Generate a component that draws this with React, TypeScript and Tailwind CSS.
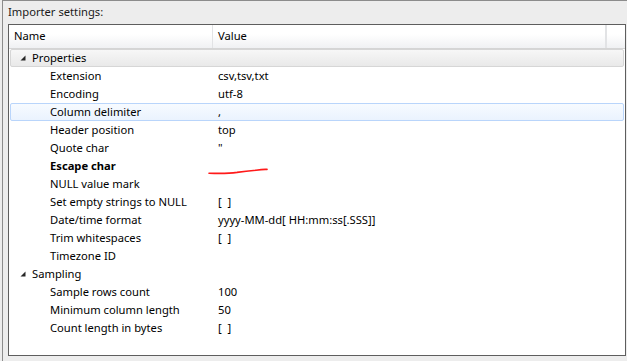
import React from "react";

type Row = { label: string; value?: string; bold?: boolean; selected?: boolean; mark?: boolean };

const props: Row[] = [
  { label: "Extension", value: "csv,tsv,txt" },
  { label: "Encoding", value: "utf-8" },
  { label: "Column delimiter", value: ",", selected: true },
  { label: "Header position", value: "top" },
  { label: "Quote char", value: '"' },
  { label: "Escape char", bold: true, mark: true },
  { label: "NULL value mark" },
  { label: "Set empty strings to NULL", value: "[  ]" },
  { label: "Date/time format", value: "yyyy-MM-dd[ HH:mm:ss[.SSS]]" },
  { label: "Trim whitespaces", value: "[  ]" },
  { label: "Timezone ID" },
];

const sampling: Row[] = [
  { label: "Sample rows count", value: "100" },
  { label: "Minimum column length", value: "50" },
  { label: "Count length in bytes", value: "[  ]" },
];

function Tri() {
  return (
    <svg width="6" height="6" viewBox="0 0 6 6" className="shrink-0">
      <polygon points="5.5,0.5 5.5,5.5 0.5,5.5" fill="#262626" />
    </svg>
  );
}

function Group({ label, boxed }: { label: string; boxed?: boolean }) {
  return (
    <div
      className={
        "h-[18px] mx-[1px] flex items-center pl-[9px] rounded-[2px] border " +
        (boxed
          ? "border-[#d6d6d6] bg-gradient-to-b from-[#f7f7f7] to-[#e9e9e9]"
          : "border-transparent")
      }
    >
      <Tri />
      <span className="ml-[6px] text-black">{label}</span>
    </div>
  );
}

function PropRow({ r }: { r: Row }) {
  return (
    <div
      className={
        "h-[18px] mx-[1px] flex items-center rounded-[2px] border relative " +
        (r.selected
          ? "border-[#b9d5fb] bg-gradient-to-b from-[#f7fbff] to-[#eaf3fe]"
          : "border-transparent")
      }
    >
      <div className={"w-[202px] pl-[39px] whitespace-nowrap " + (r.bold ? "font-bold" : "")}>{r.label}</div>
      <div className="pl-[5px] whitespace-pre">{r.value ?? ""}</div>
      {r.mark && (
        <svg className="absolute left-[197px] top-[9px]" width="62" height="8" viewBox="0 0 62 8">
          <path
            d="M1 6.2 C 12 6.6, 22 6.4, 29 5.4 C 36 4.2, 42 3.6, 48 3.2 C 52 2.6, 56 2.2, 59 2.4"
            stroke="#ff1a1a"
            strokeWidth="1.6"
            fill="none"
            strokeLinecap="round"
          />
        </svg>
      )}
    </div>
  );
}

export default function App() {
  return (
    <div
      className="w-[627px] h-[361px] bg-[#ededed] overflow-hidden text-[11.2px] text-black"
      style={{ fontFamily: '"Noto Sans", "Open Sans", sans-serif' }}
    >
      <div className="ml-[2px] h-full border-l border-t border-[#8c8c8c]">
        <div className="h-[23px] flex items-center pl-[5px] text-[#1a1a1a]">Importer settings:</div>
        <div className="ml-[5px] w-[618px] h-[332px] border border-[#5e5e5e] bg-white flex flex-col">
          <div className="h-[24px] flex border-b border-[#d5d5d5] bg-gradient-to-b from-white from-40% to-[#f0f1f3]">
            <div className="w-[204px] border-r border-[#e2e3e5] pl-[5px] flex items-center">Name</div>
            <div className="w-[394px] border-r-2 border-[#e2e3e5] pl-[5px] flex items-center">Value</div>
            <div className="flex-1" />
          </div>
          <div>
            <Group label="Properties" boxed />
            {props.map((r) => (
              <PropRow key={r.label} r={r} />
            ))}
            <Group label="Sampling" />
            {sampling.map((r) => (
              <PropRow key={r.label} r={r} />
            ))}
          </div>
        </div>
      </div>
    </div>
  );
}
